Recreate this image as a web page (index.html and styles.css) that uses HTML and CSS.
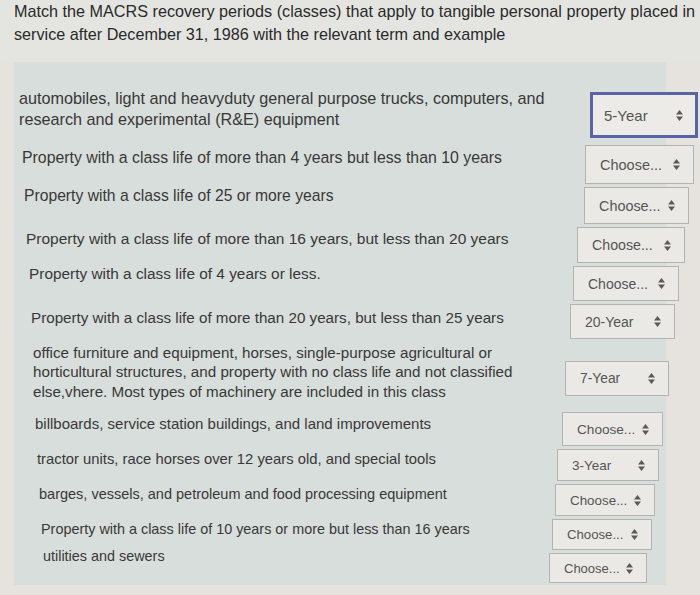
FILE: index.html
```html
<!DOCTYPE html>
<html lang="en">
<head>
<meta charset="utf-8">
<title>MACRS recovery periods</title>
<link rel="stylesheet" href="styles.css">
</head>
<body>
<div class="page">
  <p class="title">Match the MACRS recovery periods (classes) that apply to tangible personal property placed in<br>service after December 31, 1986 with the relevant term and example</p>
  <div class="panel">
    <div class="row">
      <div class="txt">automobiles, light and heavyduty general purpose trucks, computers, and research and experimental (R&amp;E) equipment</div>
      <div class="sel focus"><span>5-Year</span><svg class="arr" viewBox="0 0 7 11"><path d="M0 4.5L3.5 0L7 4.5ZM0 6.5L3.5 11L7 6.5Z"/></svg></div>
    </div>
    <div class="row">
      <div class="txt">Property with a class life of more than 4 years but less than 10 years</div>
      <div class="sel"><span>Choose...</span><svg class="arr" viewBox="0 0 7 11"><path d="M0 4.5L3.5 0L7 4.5ZM0 6.5L3.5 11L7 6.5Z"/></svg></div>
    </div>
    <div class="row">
      <div class="txt">Property with a class life of 25 or more years</div>
      <div class="sel"><span>Choose...</span><svg class="arr" viewBox="0 0 7 11"><path d="M0 4.5L3.5 0L7 4.5ZM0 6.5L3.5 11L7 6.5Z"/></svg></div>
    </div>
    <div class="row">
      <div class="txt">Property with a class life of more than 16 years, but less than 20 years</div>
      <div class="sel"><span>Choose...</span><svg class="arr" viewBox="0 0 7 11"><path d="M0 4.5L3.5 0L7 4.5ZM0 6.5L3.5 11L7 6.5Z"/></svg></div>
    </div>
    <div class="row">
      <div class="txt">Property with a class life of 4 years or less.</div>
      <div class="sel"><span>Choose...</span><svg class="arr" viewBox="0 0 7 11"><path d="M0 4.5L3.5 0L7 4.5ZM0 6.5L3.5 11L7 6.5Z"/></svg></div>
    </div>
    <div class="row">
      <div class="txt">Property with a class life of more than 20 years, but less than 25 years</div>
      <div class="sel"><span>20-Year</span><svg class="arr" viewBox="0 0 7 11"><path d="M0 4.5L3.5 0L7 4.5ZM0 6.5L3.5 11L7 6.5Z"/></svg></div>
    </div>
    <div class="row">
      <div class="txt">office furniture and equipment, horses, single-purpose agricultural or horticultural structures, and property with no class life and not classified else,vhere. Most types of machinery are included in this class</div>
      <div class="sel"><span>7-Year</span><svg class="arr" viewBox="0 0 7 11"><path d="M0 4.5L3.5 0L7 4.5ZM0 6.5L3.5 11L7 6.5Z"/></svg></div>
    </div>
    <div class="row">
      <div class="txt">billboards, service station buildings, and land improvements</div>
      <div class="sel"><span>Choose...</span><svg class="arr" viewBox="0 0 7 11"><path d="M0 4.5L3.5 0L7 4.5ZM0 6.5L3.5 11L7 6.5Z"/></svg></div>
    </div>
    <div class="row">
      <div class="txt">tractor units, race horses over 12 years old, and special tools</div>
      <div class="sel"><span>3-Year</span><svg class="arr" viewBox="0 0 7 11"><path d="M0 4.5L3.5 0L7 4.5ZM0 6.5L3.5 11L7 6.5Z"/></svg></div>
    </div>
    <div class="row">
      <div class="txt">barges, vessels, and petroleum and food processing equipment</div>
      <div class="sel"><span>Choose...</span><svg class="arr" viewBox="0 0 7 11"><path d="M0 4.5L3.5 0L7 4.5ZM0 6.5L3.5 11L7 6.5Z"/></svg></div>
    </div>
    <div class="row">
      <div class="txt">Property with a class life of 10 years or more but less than 16 years</div>
      <div class="sel"><span>Choose...</span><svg class="arr" viewBox="0 0 7 11"><path d="M0 4.5L3.5 0L7 4.5ZM0 6.5L3.5 11L7 6.5Z"/></svg></div>
    </div>
    <div class="row">
      <div class="txt">utilities and sewers</div>
      <div class="sel"><span>Choose...</span><svg class="arr" viewBox="0 0 7 11"><path d="M0 4.5L3.5 0L7 4.5ZM0 6.5L3.5 11L7 6.5Z"/></svg></div>
    </div>
  </div>
</div>
</body>
</html>
```
FILE: styles.css
```css
html, body {
  margin: 0;
  padding: 0;
  width: 700px;
  height: 595px;
  overflow: hidden;
  background: #e6e2dd;
}

.page {
  font-family: "Liberation Sans", Arial, sans-serif;
  color: #383838;
  background: linear-gradient(#e4e5e1, #e4e5e1 62px, transparent 62px);
  height: 595px;
}

.title {
  margin: 0;
  padding: 0 0 0 14px;
  font-size: 16.2px;
  line-height: 23px;
  color: #2a2a2a;
  white-space: nowrap;
}

.panel {
  margin: 16px 0 0 14px;
  width: 652px;
  padding: 30px 0 2px 0;
  background: #d8dedb;
  display: flex;
  flex-direction: column;
  gap: 3px;
}

.row {
  display: flex;
  align-items: center;
  gap: 18px;
  padding-left: var(--pl);
  margin-right: var(--mr);
}

.txt {
  flex: 1;
  font-size: var(--fs);
  line-height: 1.3;
  margin-top: -12px;
}

.sel {
  flex: none;
  box-sizing: border-box;
  width: var(--bw);
  height: var(--bh);
  font-size: var(--bfs);
  display: flex;
  align-items: center;
  justify-content: space-between;
  padding: 0 13px 0 14px;
  border: 1px solid #b3b4b1;
  background: #ebe9e6;
  color: #555;
}

.sel.focus {
  border: 3px solid #5a62a8;
  padding: 0 12px 0 11px;
  background: #ecebe8;
}

.arr {
  width: 7px;
  height: 11px;
  fill: #5a5a5a;
}

.row:nth-child(1)  { --pl: 5px;  --mr: -32px; --fs: 16.2px;  --bw: 108px; --bh: 46px; --bfs: 15px; margin-bottom: 4px; }
.row:nth-child(2)  { --pl: 8px;  --mr: -28px; --fs: 15.85px; --bw: 109px; --bh: 39px; --bfs: 14.5px; }
.row:nth-child(3)  { --pl: 10px; --mr: -23px; --fs: 15.7px;  --bw: 105px; --bh: 37px; --bfs: 14.4px; }
.row:nth-child(4)  { --pl: 12px; --mr: -19px; --fs: 15.5px;  --bw: 108px; --bh: 36px; --bfs: 14.2px; }
.row:nth-child(5)  { --pl: 15px; --mr: -13px; --fs: 15.4px;  --bw: 106px; --bh: 35px; --bfs: 14px; }
.row:nth-child(6)  { --pl: 17px; --mr: -9px;  --fs: 15.2px;  --bw: 105px; --bh: 35px; --bfs: 14px; }
.row:nth-child(7)  { --pl: 19px; --mr: -3px;  --fs: 15.2px;  --bw: 104px; --bh: 35px; --bfs: 13.8px; padding-top: 13px; padding-bottom: 8px; }
.row:nth-child(8)  { --pl: 21px; --mr: 3px;   --fs: 15px;    --bw: 101px; --bh: 34px; --bfs: 13.6px; }
.row:nth-child(9)  { --pl: 23px; --mr: 7px;   --fs: 14.8px;  --bw: 102px; --bh: 32px; --bfs: 13.5px; }
.row:nth-child(10) { --pl: 25px; --mr: 11px;  --fs: 14.5px;  --bw: 100px; --bh: 32px; --bfs: 13.4px; }
.row:nth-child(11) { --pl: 27px; --mr: 14px;  --fs: 14.4px;  --bw: 100px; --bh: 31px; --bfs: 13.2px; }
.row:nth-child(12) { --pl: 29px; --mr: 19px;  --fs: 14.4px;  --bw: 98px;  --bh: 30px; --bfs: 13px; }
.row:nth-child(3) .txt { margin-top: -18px; }
.row:nth-child(5) .txt { margin-top: -18px; }
.row:nth-child(6) .txt { margin-top: -8px; }
.row:nth-child(7) .txt { line-height: 1.28; }
.row:nth-child(12) .txt { margin-top: -24px; }
```
